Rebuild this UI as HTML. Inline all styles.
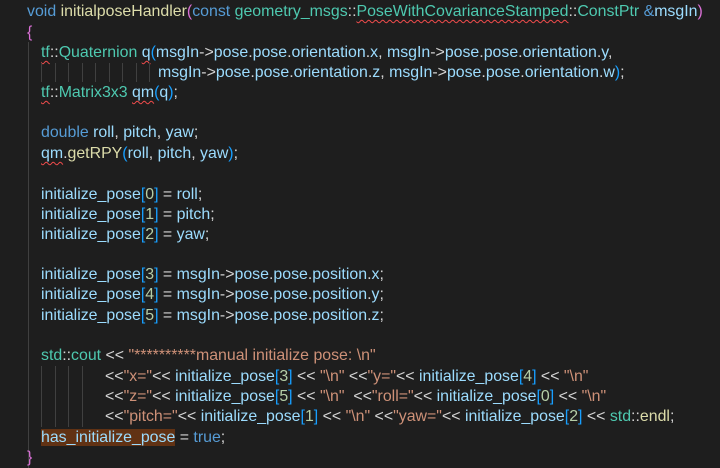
<!DOCTYPE html>
<html><head><meta charset="utf-8"><style>
body{margin:0;width:720px;height:468px;background:#1e1e1e;overflow:hidden;position:relative;font-family:"Liberation Sans",sans-serif;font-size:15.9px;color:#d4d4d4}
.l{position:absolute;white-space:pre;height:20px;line-height:20px;margin-top:1px}
.k{color:#569cd6}.f{color:#dcdcaa}.t{color:#4ec9b0}.v{color:#9cdcfe}.s{color:#ce9178}.n{color:#b5cea8}
.p1{color:#da70d6}.p2{color:#179fff}
.w{text-decoration:underline wavy #f14c4c;text-decoration-thickness:1px;text-underline-offset:3px}
.h{background:#613214}
.g{position:absolute;width:1px;background:#404040}
</style></head><body>
<div class="g" style="left:28px;top:42px;height:426px"></div>
<div class="l" style="left:27px;top:1px"><span class="k">void</span> <span class="f">initialposeHandler</span><span class="p1">(</span><span class="k">const</span> <span class="t">geometry_msgs</span>::<span class="t w">PoseWithCovarianceStamped</span>::<span class="t">ConstPtr</span> <span class="k">&amp;</span><span class="v">msgIn</span><span class="p1">)</span></div>
<div class="l" style="left:27px;top:22px"><span class="p1">{</span></div>
<div class="l" style="left:41px;top:42px"><span class="t w">tf</span>::<span class="t">Quaternion</span> <span class="v w">q</span><span class="p2">(</span><span class="v">msgIn</span>-&gt;<span class="v">pose</span>.<span class="v">pose</span>.<span class="v">orientation</span>.<span class="v">x</span>, <span class="v">msgIn</span>-&gt;<span class="v">pose</span>.<span class="v">pose</span>.<span class="v">orientation</span>.<span class="v">y</span>,</div>
<div class="l" style="left:158px;top:62px"><span class="v">msgIn</span>-&gt;<span class="v">pose</span>.<span class="v">pose</span>.<span class="v">orientation</span>.<span class="v">z</span>, <span class="v">msgIn</span>-&gt;<span class="v">pose</span>.<span class="v">pose</span>.<span class="v">orientation</span>.<span class="v">w</span><span class="p2">)</span>;</div>
<div class="g" style="left:41px;top:63px;height:19px"></div><div class="g" style="left:55px;top:63px;height:19px"></div><div class="g" style="left:68px;top:63px;height:19px"></div><div class="g" style="left:82px;top:63px;height:19px"></div><div class="g" style="left:95px;top:63px;height:19px"></div><div class="g" style="left:109px;top:63px;height:19px"></div><div class="g" style="left:122px;top:63px;height:19px"></div><div class="g" style="left:136px;top:63px;height:19px"></div><div class="g" style="left:149px;top:63px;height:19px"></div>
<div class="l" style="left:41px;top:82px"><span class="t w">tf</span>::<span class="t">Matrix3x3</span> <span class="v w">qm</span><span class="p2">(</span><span class="v">q</span><span class="p2">)</span>;</div>
<div class="l" style="left:41px;top:122px"><span class="k">double</span> <span class="v">roll</span>, <span class="v">pitch</span>, <span class="v">yaw</span>;</div>
<div class="l" style="left:41px;top:143px"><span class="v w">qm</span>.<span class="f">getRPY</span><span class="p2">(</span><span class="v">roll</span>, <span class="v">pitch</span>, <span class="v">yaw</span><span class="p2">)</span>;</div>
<div class="l" style="left:41px;top:184px"><span class="v">initialize_pose</span><span class="p2">[</span><span class="n">0</span><span class="p2">]</span> = <span class="v">roll</span>;</div>
<div class="l" style="left:41px;top:204px"><span class="v">initialize_pose</span><span class="p2">[</span><span class="n">1</span><span class="p2">]</span> = <span class="v">pitch</span>;</div>
<div class="l" style="left:41px;top:224px"><span class="v">initialize_pose</span><span class="p2">[</span><span class="n">2</span><span class="p2">]</span> = <span class="v">yaw</span>;</div>
<div class="l" style="left:41px;top:264px"><span class="v">initialize_pose</span><span class="p2">[</span><span class="n">3</span><span class="p2">]</span> = <span class="v">msgIn</span>-&gt;<span class="v">pose</span>.<span class="v">pose</span>.<span class="v">position</span>.<span class="v">x</span>;</div>
<div class="l" style="left:41px;top:284px"><span class="v">initialize_pose</span><span class="p2">[</span><span class="n">4</span><span class="p2">]</span> = <span class="v">msgIn</span>-&gt;<span class="v">pose</span>.<span class="v">pose</span>.<span class="v">position</span>.<span class="v">y</span>;</div>
<div class="l" style="left:41px;top:305px"><span class="v">initialize_pose</span><span class="p2">[</span><span class="n">5</span><span class="p2">]</span> = <span class="v">msgIn</span>-&gt;<span class="v">pose</span>.<span class="v">pose</span>.<span class="v">position</span>.<span class="v">z</span>;</div>
<div class="l" style="left:41px;top:345px"><span class="t">std</span>::<span class="t">cout</span> &lt;&lt; <span class="s">"**********manual initialize pose: \n"</span></div>
<div class="g" style="left:41px;top:366px;height:61px"></div><div class="g" style="left:55px;top:366px;height:61px"></div><div class="g" style="left:68px;top:366px;height:61px"></div><div class="g" style="left:82px;top:366px;height:61px"></div>
<div class="l" style="left:105px;top:366px">&lt;&lt;<span class="s">"x="</span>&lt;&lt; <span class="v">initialize_pose</span><span class="p2">[</span><span class="n">3</span><span class="p2">]</span> &lt;&lt; <span class="s">"\n"</span> &lt;&lt;<span class="s">"y="</span>&lt;&lt; <span class="v">initialize_pose</span><span class="p2">[</span><span class="n">4</span><span class="p2">]</span> &lt;&lt; <span class="s">"\n"</span></div>
<div class="l" style="left:105px;top:386px">&lt;&lt;<span class="s">"z="</span>&lt;&lt; <span class="v">initialize_pose</span><span class="p2">[</span><span class="n">5</span><span class="p2">]</span> &lt;&lt; <span class="s">"\n"</span>  &lt;&lt;<span class="s">"roll="</span>&lt;&lt; <span class="v">initialize_pose</span><span class="p2">[</span><span class="n">0</span><span class="p2">]</span> &lt;&lt; <span class="s">"\n"</span></div>
<div class="l" style="left:105px;top:406px">&lt;&lt;<span class="s">"pitch="</span>&lt;&lt; <span class="v">initialize_pose</span><span class="p2">[</span><span class="n">1</span><span class="p2">]</span> &lt;&lt; <span class="s">"\n"</span> &lt;&lt;<span class="s">"yaw="</span>&lt;&lt; <span class="v">initialize_pose</span><span class="p2">[</span><span class="n">2</span><span class="p2">]</span> &lt;&lt; <span class="t">std</span>::<span class="f">endl</span>;</div>
<div class="l" style="left:41px;top:427px"><span class="v h">has_initialize_pose</span> = <span class="k">true</span>;</div>
<div class="l" style="left:27px;top:447px"><span class="p1">}</span></div>
</body></html>
